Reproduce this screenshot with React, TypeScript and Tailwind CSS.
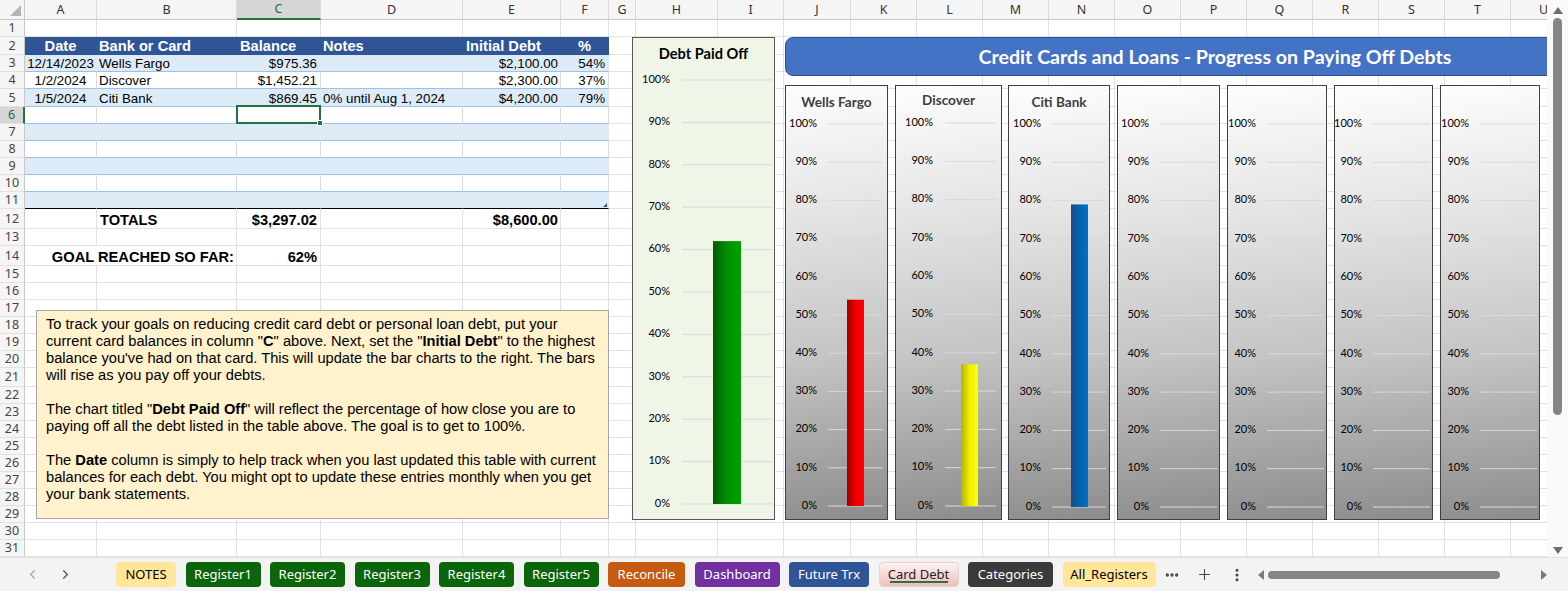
import React from "react";
import { ChevronLeft, ChevronRight, Plus, Ellipsis, EllipsisVertical } from "lucide-react";

// колонки листа: ширины взяты с экрана
const COLS = [
  { id: "A", w: "w-[72px]" },
  { id: "B", w: "w-[140px]" },
  { id: "C", w: "w-[84px]" },
  { id: "D", w: "w-[142px]" },
  { id: "E", w: "w-[98px]" },
  { id: "F", w: "w-[48px]" },
  { id: "G", w: "w-[27px]" },
  { id: "H", w: "w-[82px]" },
  { id: "I", w: "w-[66px]" },
  { id: "J", w: "w-[67px]" },
  { id: "K", w: "w-[66px]" },
  { id: "L", w: "w-[66px]" },
  { id: "M", w: "w-[66px]" },
  { id: "N", w: "w-[66px]" },
  { id: "O", w: "w-[66px]" },
  { id: "P", w: "w-[66px]" },
  { id: "Q", w: "w-[66px]" },
  { id: "R", w: "w-[66px]" },
  { id: "S", w: "w-[66px]" },
  { id: "T", w: "w-[66px]" },
  { id: "U", w: "w-[66px]" },
];

const rowHeight = (n: number) => {
  if (n === 12 || n === 14) return "h-[20px]";
  if (n === 21) return "h-[19px]";
  if (n === 2 || n === 5) return "h-[18px]";
  return "h-[17px]";
};

const TABLE: Record<number, string[]> = {
  2: ["Date", "Bank or Card", "Balance", "Notes", "Initial Debt", "%"],
  3: ["12/14/2023", "Wells Fargo", "$975.36", "", "$2,100.00", "54%"],
  4: ["1/2/2024", "Discover", "$1,452.21", "", "$2,300.00", "37%"],
  5: ["1/5/2024", "Citi Bank", "$869.45", "0% until Aug 1, 2024", "$4,200.00", "79%"],
};
const ALIGN = ["justify-center", "justify-start pl-[2px]", "justify-end pr-[3px]", "justify-start pl-[2px]", "justify-end pr-[2px]", "justify-end pr-[3px]"];
const HEAD_ALIGN = ["justify-center", "justify-start pl-[2px]", "justify-start pl-[3px]", "justify-start pl-[2px]", "justify-start pl-[3px]", "justify-center"];

const EXTRA: Record<number, Record<number, { text: string; cls: string }>> = {
  12: {
    1: { text: "TOTALS", cls: "justify-start pl-[3px] font-bold text-[14.67px] leading-[16px]" },
    2: { text: "$3,297.02", cls: "justify-end pr-[3px] font-bold text-[14.67px] leading-[16px]" },
    4: { text: "$8,600.00", cls: "justify-end pr-[2px] font-bold text-[14.67px] leading-[16px]" },
  },
  14: {
    1: { text: "GOAL REACHED SO FAR:", cls: "justify-end pr-[2px] font-bold text-[14.67px] leading-[16px]" },
    2: { text: "62%", cls: "justify-end pr-[3px] font-bold text-[14.67px] leading-[16px]" },
  },
};

function SheetRow({ n }: { n: number }) {
  const inTable = n >= 2 && n <= 11;
  const selected = n === 6;
  return (
    <div className={`flex ${rowHeight(n)}`}>
      <div
        className={`w-[25px] shrink-0 flex items-center justify-center pt-[1px] leading-none font-['Noto_Sans',sans-serif] text-[12.5px] border-b border-[#e1e1e1] ${
          selected
            ? "bg-[#d6d6d6] text-[#1a6b3c] border-r-2 border-r-[#217346]"
            : "bg-[#f5f5f5] text-[#444] border-r border-r-[#c8c8c8]"
        }`}
      >
        {n}
      </div>
      {COLS.map((c, i) => {
        let cls = "border-r border-b border-[#e1e1e1] bg-white";
        let text: React.ReactNode = null;
        let align = "justify-start";
        if (inTable && i < 6) {
          const edge = i === 5 ? "border-r-[#9bc2e6]" : "";
          const bottom = n === 11 ? "border-b-black" : "border-b-[#9bc2e6]";
          if (n === 2) {
            cls = "bg-[#2f5597] text-white font-bold text-[14.67px] leading-[16px] border-r border-b border-[#2f5597]";
            align = HEAD_ALIGN[i];
          } else if (n % 2 === 1) {
            cls = `bg-[#ddebf7] border-r border-b border-r-[#ddebf7] ${bottom} ${edge}`;
            align = ALIGN[i];
          } else {
            cls = `bg-white border-r border-b border-r-[#d9d9d9] ${bottom} ${edge}`;
            align = ALIGN[i];
          }
          text = TABLE[n]?.[i] ?? null;
        }
        const extra = EXTRA[n]?.[i];
        if (extra) {
          text = extra.text;
          align = extra.cls;
        }
        if (n === 14 && i === 0) cls = "border-b border-[#e1e1e1] bg-white";
        const active = n === 6 && i === 2;
        const spills = n === 14 && i === 1;
        return (
          <div
            key={c.id}
            className={`${c.w} shrink-0 relative flex items-end whitespace-nowrap text-[13.33px] leading-[14px] text-black ${
              active || spills ? "" : "overflow-hidden"
            } ${cls} ${align}`}
          >
            {text}
            {active && (
              <span className="absolute z-10 left-[-1px] top-[-2px] w-[85px] h-[19px] border-2 border-[#217346]">
                <span className="absolute right-[-4px] bottom-[-4px] w-[6px] h-[6px] bg-[#217346] border border-white" />
              </span>
            )}
            {n === 11 && i === 5 && (
              <span className="absolute right-[1px] bottom-[1px] w-0 h-0 border-l-[4px] border-l-transparent border-b-[4px] border-b-[#2f5597]" />
            )}
          </div>
        );
      })}
    </div>
  );
}

type Chart = {
  pos: string;
  title?: string;
  titleY?: number;
  labelX: number;
  gx1: number;
  gx2: number;
  y100: number;
  y0: number;
  barX?: number;
  barW?: number;
  value?: number;
  color?: "green" | "red" | "yellow" | "blue";
};

const BAR_STOPS = {
  green: ["#005a00", "#009000", "#00a000"],
  red: ["#9c0000", "#ee0000", "#ff0000"],
  yellow: ["#b3b300", "#eeee00", "#ffff00"],
  blue: ["#1f4a80", "#0063b0", "#0072c4"],
};

const TICKS = [100, 90, 80, 70, 60, 50, 40, 30, 20, 10, 0];

function ChartPlot({ c, id, titleCls }: { c: Chart; id: string; titleCls: string }) {
  const y = (p: number) => c.y0 - ((c.y0 - c.y100) * p) / 100;
  const stops = c.color ? BAR_STOPS[c.color] : null;
  return (
    <svg width="100%" height="100%" className="block font-['Lato',sans-serif]">
      {stops && (
        <defs>
          <linearGradient id={id} x1="0" x2="1" y1="0" y2="0">
            <stop offset="0" stopColor={stops[0]} />
            <stop offset="0.5" stopColor={stops[1]} />
            <stop offset="1" stopColor={stops[2]} />
          </linearGradient>
        </defs>
      )}
      {c.title && (
        <text x="50%" y={c.titleY} textAnchor="middle" dominantBaseline="middle" className={titleCls}>
          {c.title}
        </text>
      )}
      {TICKS.map((t) => (
        <g key={t}>
          <line x1={c.gx1} x2={c.gx2} y1={y(t)} y2={y(t)} stroke="#d9d9d9" strokeWidth="1" />
          <text
            x={c.labelX}
            y={y(t)}
            textAnchor="end"
            dominantBaseline="middle"
            fontSize="11"
            fill="#000"
          >
            {t}%
          </text>
        </g>
      ))}
      {stops && c.value != null && (
        <rect x={c.barX} y={y(c.value)} width={c.barW} height={y(0) - y(c.value)} fill={`url(#${id})`} />
      )}
    </svg>
  );
}

const CARDS: Chart[] = [
  { pos: "left-[785px] w-[103px]", title: "Wells Fargo", titleY: 18, labelX: 31, gx1: 42, gx2: 97, y100: 38, y0: 420, barX: 61, barW: 17, value: 54, color: "red" },
  { pos: "left-[895px] w-[107px]", title: "Discover", titleY: 16, labelX: 37, gx1: 49, gx2: 100, y100: 37, y0: 420, barX: 65, barW: 17, value: 37, color: "yellow" },
  { pos: "left-[1008px] w-[102px]", title: "Citi Bank", titleY: 18, labelX: 32, gx1: 43, gx2: 97, y100: 38, y0: 421, barX: 62, barW: 17, value: 79, color: "blue" },
  { pos: "left-[1117px] w-[103px]", labelX: 31, gx1: 42, gx2: 99, y100: 38, y0: 421 },
  { pos: "left-[1227px] w-[100px]", labelX: 28, gx1: 39, gx2: 96, y100: 38, y0: 421 },
  { pos: "left-[1334px] w-[99px]", labelX: 27, gx1: 38, gx2: 95, y100: 38, y0: 421 },
  { pos: "left-[1440px] w-[100px]", labelX: 28, gx1: 39, gx2: 96, y100: 38, y0: 421 },
];

const PAID_OFF: Chart = {
  pos: "",
  title: "Debt Paid Off",
  titleY: 17,
  labelX: 37,
  gx1: 49,
  gx2: 139,
  y100: 42,
  y0: 466,
  barX: 80,
  barW: 28,
  value: 62,
  color: "green",
};

const TABS = [
  { label: "NOTES", cls: "w-[60px] bg-[#ffe699] text-black" },
  { label: "Register1", cls: "w-[75px] bg-[#0b650b] text-white" },
  { label: "Register2", cls: "w-[75px] bg-[#0b650b] text-white" },
  { label: "Register3", cls: "w-[75px] bg-[#0b650b] text-white" },
  { label: "Register4", cls: "w-[75px] bg-[#0b650b] text-white" },
  { label: "Register5", cls: "w-[75px] bg-[#0b650b] text-white" },
  { label: "Reconcile", cls: "w-[77px] bg-[#c55a11] text-white" },
  { label: "Dashboard", cls: "w-[85px] bg-[#7030a0] text-white" },
  { label: "Future Trx", cls: "w-[80px] bg-[#2f5597] text-white" },
  { label: "Card Debt", cls: "w-[80px] bg-[linear-gradient(#fdf3f3,#f2bcbc)] text-[#222] border border-[#e6d0d0]", active: true },
  { label: "Categories", cls: "w-[85px] bg-[#3a3a3a] text-white" },
  { label: "All_Registers", cls: "w-[93px] bg-[#ffe699] text-black" },
];

export default function App() {
  const rows = Array.from({ length: 31 }, (_, i) => i + 1);
  return (
    <div className="w-[1568px] h-[591px] overflow-hidden bg-white flex flex-col font-['Liberation_Sans',Arial,sans-serif]">
      <div className="flex h-[557px]">
        {/* сетка листа */}
        <div className="relative w-[1547px] h-[557px] overflow-hidden">
          <div className="flex h-[20px]">
            <div className="w-[25px] shrink-0 relative bg-[#f5f5f5] border-r border-b border-[#c8c8c8]">
              <span className="absolute right-[3px] bottom-[3px] w-0 h-0 border-l-[11px] border-l-transparent border-b-[11px] border-b-[#b4b4b4]" />
            </div>
            {COLS.map((c) => (
              <div
                key={c.id}
                className={`${c.w} shrink-0 flex items-center justify-center pt-[1px] leading-none font-['Noto_Sans',sans-serif] text-[12.5px] border-r border-r-[#dadada] ${
                  c.id === "C"
                    ? "bg-[#d6d6d6] text-[#1a6b3c] border-b-2 border-b-[#217346]"
                    : "bg-[#f5f5f5] text-[#333] border-b border-b-[#c8c8c8]"
                }`}
              >
                {c.id}
              </div>
            ))}
          </div>
          {rows.map((n) => (
            <SheetRow key={n} n={n} />
          ))}

          {/* подсказка */}
          <div className="absolute left-[36px] top-[310px] w-[573px] h-[209px] bg-[#fff2cc] border border-[#a6a6a6] pl-[9px] pt-[5px] text-[14.67px] leading-[17px] text-black whitespace-nowrap">
            <p>To track your goals on reducing credit card debt or personal loan debt, put your</p>
            <p>
              current card balances in column "<b>C</b>" above. Next, set the "<b>Initial Debt</b>" to the highest
            </p>
            <p>balance you've had on that card. This will update the bar charts to the right. The bars</p>
            <p>will rise as you pay off your debts.</p>
            <p className="mt-[17px]">
              The chart titled "<b>Debt Paid Off</b>" will reflect the percentage of how close you are to
            </p>
            <p>paying off all the debt listed in the table above. The goal is to get to 100%.</p>
            <p className="mt-[17px]">
              The <b>Date</b> column is simply to help track when you last updated this table with current
            </p>
            <p>balances for each debt. You might opt to update these entries monthly when you get</p>
            <p>your bank statements.</p>
          </div>

          {/* диаграмма общего прогресса */}
          <div className="absolute left-[632px] top-[37px] w-[143px] h-[483px] bg-[#eff6e8] border border-[#595959]">
            <ChartPlot c={PAID_OFF} id="bar-total" titleCls="text-[14.6px] font-bold fill-black" />
          </div>

          {/* заголовок */}
          <div className="absolute left-[785px] top-[37px] w-[860px] h-[39px] rounded-[8px] bg-[#4472c4] border border-[#2f528f] flex items-center justify-center text-white font-bold text-[19.6px] font-['Lato',sans-serif]">
            Credit Cards and Loans - Progress on Paying Off Debts
          </div>

          {CARDS.map((c, i) => (
            <div
              key={i}
              className={`absolute top-[85px] h-[435px] ${c.pos} border border-[#404040] bg-[linear-gradient(172deg,#fdfdfd_0%,#e4e4e4_30%,#c4c4c4_62%,#8c8c8c_100%)]`}
            >
              <ChartPlot c={c} id={`bar-${i}`} titleCls="text-[13.6px] font-bold fill-[#404040]" />
            </div>
          ))}
        </div>

        {/* вертикальная прокрутка */}
        <div className="w-[21px] h-[557px] bg-[#fafafa] flex flex-col items-center">
          <svg width="10" height="7" className="mt-[7px]">
            <polygon points="5,0 10,7 0,7" fill="#6e6e6e" />
          </svg>
          <div className="mt-[4px] w-[9px] h-[397px] rounded-full bg-[#858585]" />
          <div className="flex-1" />
          <svg width="10" height="7" className="mb-[3px]">
            <polygon points="0,0 10,0 5,7" fill="#6e6e6e" />
          </svg>
        </div>
      </div>

      {/* ярлыки листов */}
      <div className="h-[34px] flex items-center bg-[#f3f3f3] border-t border-[#e1e1e1] font-['Noto_Sans',sans-serif] text-[13px]">
        <div className="w-[116px] shrink-0 flex items-center pl-[25px] gap-[18px]">
          <ChevronLeft size={15} color="#a6a6a6" />
          <ChevronRight size={15} color="#555" />
        </div>
        <div className="flex-1 flex items-center gap-[9.5px]">
          {TABS.map((t) => (
            <div
              key={t.label}
              className={`${t.cls} shrink-0 h-[25px] rounded-[4px] flex items-center justify-center relative whitespace-nowrap`}
            >
              {t.label}
              {t.active && <span className="absolute left-[10px] right-[10px] bottom-[3px] h-[2px] bg-[#217346]" />}
            </div>
          ))}
        </div>
        <div className="w-[416px] shrink-0 flex items-center text-[#444]">
          <div className="w-[32px] flex justify-center">
            <Ellipsis size={16} strokeWidth={3} />
          </div>
          <div className="w-[34px] flex justify-center">
            <Plus size={17} strokeWidth={1.5} />
          </div>
          <div className="w-[30px] flex justify-center">
            <EllipsisVertical size={16} strokeWidth={2.5} />
          </div>
          <div className="w-[6px]" />
          <svg width="6" height="10">
            <polygon points="6,0 6,10 0,5" fill="#7a7a7a" />
          </svg>
          <div className="ml-[4px] w-[232px] h-[8px] rounded-full bg-[#858585]" />
          <div className="flex-1" />
          <svg width="6" height="10" className="mr-[25px]">
            <polygon points="0,0 6,5 0,10" fill="#7a7a7a" />
          </svg>
        </div>
      </div>
    </div>
  );
}
